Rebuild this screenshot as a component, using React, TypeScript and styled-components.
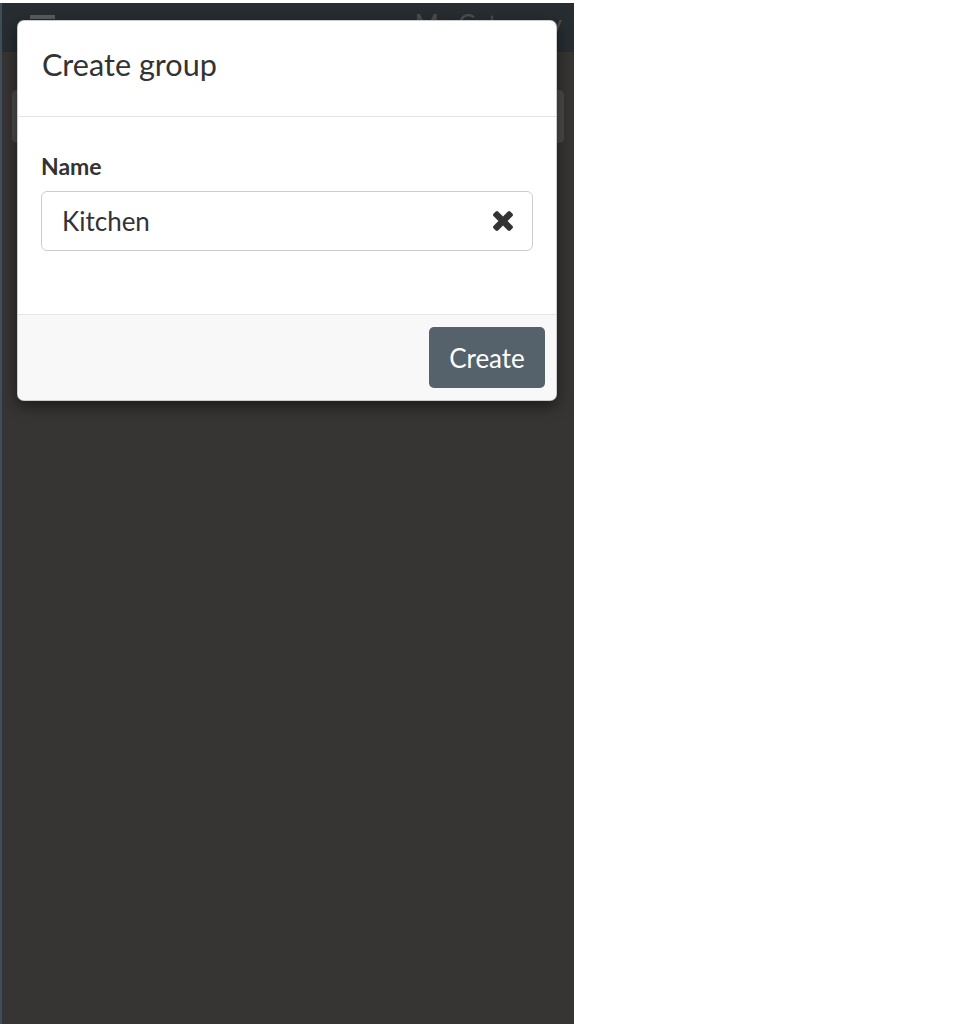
import React from "react";
import styled, { createGlobalStyle } from "styled-components";

const Global = createGlobalStyle`
  html, body { margin: 0; padding: 0; background: #ffffff; }
  body { font-family: Lato, "Open Sans", sans-serif; }
  #root { padding-top: 3px; }
`;

const AppFrame = styled.div`
  position: relative;
  width: 574px;
  height: 1021px;
  background: #6e6a66;
  border-left: 2px solid #3e4e58;
  box-sizing: border-box;
  display: flex;
  flex-direction: column;
  overflow: hidden;
`;

const NavBar = styled.div`
  height: 49px;
  background: #4e5a62;
  display: flex;
  align-items: flex-start;
  justify-content: space-between;
  padding: 6px 12px 0 28px;
  box-sizing: border-box;
`;

const Burger = styled.div`
  display: flex;
  flex-direction: column;
  gap: 5px;
  width: 25px;
  margin-top: 6px;
  span {
    display: block;
    height: 4px;
    background: #b6bcc2;
  }
`;

const NavTitle = styled.div`
  font-size: 26px;
  color: #97a1a9;
  line-height: 30px;
`;

const Content = styled.div`
  padding: 38px 10px 0 10px;
`;

const BackCard = styled.div`
  height: 53px;
  border-radius: 5px;
  background: #969492;
`;

const Overlay = styled.div`
  position: absolute;
  inset: 0;
  background: rgba(0, 0, 0, 0.5);
`;

const Modal = styled.div`
  margin: 17px 17px 0 15px;
  background: #ffffff;
  border: 1px solid rgba(0, 0, 0, 0.2);
  border-radius: 7px;
  box-shadow: 0 5px 15px rgba(0, 0, 0, 0.5);
  overflow: hidden;
`;

const Header = styled.div`
  padding: 24px 24px 31px 24px;
  border-bottom: 1px solid #e5e5e5;
`;

const Title = styled.h4`
  margin: 0;
  font-size: 30.6px;
  font-weight: 400;
  line-height: 40px;
  color: #333333;
`;

const Body = styled.div`
  padding: 36px 23px 63px 23px;
`;

const Label = styled.label`
  display: block;
  font-size: 23px;
  font-weight: 700;
  line-height: 27px;
  color: #333333;
  margin-bottom: 11px;
`;

const InputWrap = styled.div`
  height: 60px;
  border: 1.5px solid #cccccc;
  border-radius: 6px;
  box-sizing: border-box;
  display: flex;
  align-items: center;
  padding: 0 19px 0 20px;
`;

const InputText = styled.div`
  flex: 1;
  font-size: 26px;
  color: #333333;
  line-height: 1;
`;

const ClearIcon = styled.svg`
  width: 20px;
  height: 20px;
  fill: #333333;
`;

const Footer = styled.div`
  background: #f8f8f8;
  border-top: 1px solid #e5e5e5;
  padding: 12px 11px 12px 12px;
  display: flex;
  justify-content: flex-end;
`;

const Button = styled.button`
  width: 116px;
  height: 61px;
  border: none;
  border-radius: 5px;
  background: #56626b;
  color: #ffffff;
  font-family: Lato, "Open Sans", sans-serif;
  font-size: 26px;
  padding: 0;
  cursor: pointer;
`;

export default function App() {
  return (
    <>
      <Global />
      <AppFrame>
        <NavBar>
          <Burger>
            <span />
            <span />
            <span />
          </Burger>
          <NavTitle>My Category</NavTitle>
        </NavBar>
        <Content>
          <BackCard />
        </Content>
        <Overlay>
          <Modal>
            <Header>
              <Title>Create group</Title>
            </Header>
            <Body>
              <Label>Name</Label>
              <InputWrap>
                <InputText>Kitchen</InputText>
                <ClearIcon viewBox="110 366 1188 1188">
                  <path d="M1298 1322q0 40-28 68l-136 136q-28 28-68 28t-68-28l-294-294-294 294q-28 28-68 28t-68-28l-136-136q-28-28-28-68t28-68l294-294-294-294q-28-28-28-68t28-68l136-136q28-28 68-28t68 28l294 294 294-294q28-28 68-28t68 28l136 136q28 28 28 68t-28 68l-294 294 294 294q28 28 28 68z" />
                </ClearIcon>
              </InputWrap>
            </Body>
            <Footer>
              <Button>Create</Button>
            </Footer>
          </Modal>
        </Overlay>
      </AppFrame>
    </>
  );
}
